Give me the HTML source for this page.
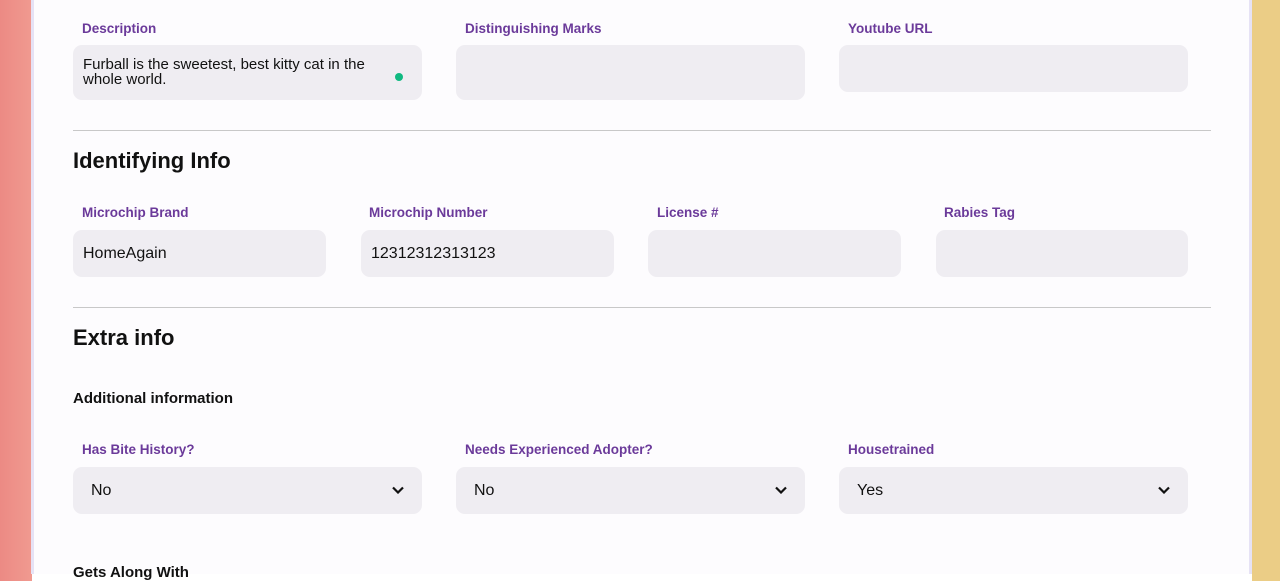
<!DOCTYPE html>
<html><head><style>
body{margin:0;width:1280px;height:574px;overflow:hidden;font-family:"Liberation Sans",sans-serif;background:linear-gradient(90deg,#ec8a84 0,#f09a90 32px,#fff 32px,#fff 1252px,#ebcd86 1252px);position:relative}
.panel{position:absolute;left:31px;top:0;width:1221px;height:574px;background:#fdfcfe;border-left:3px solid #e6e2f5;border-right:3px solid #e6e2f5;box-sizing:border-box}
.lbl{position:absolute;color:#6b3a9a;font-weight:bold;font-size:13.5px}
.box{position:absolute;background:#efedf2;border-radius:9px;font-size:16px;color:#111;box-sizing:border-box;padding-left:10px}
h2{position:absolute;margin:0;font-size:22px;font-weight:bold;color:#111;left:73px}
.hr{position:absolute;left:73px;width:1138px;height:1px;background:#c8c8c8}
.chev{position:absolute;right:18px;top:19px}
</style></head><body>
<div class="panel"></div>
<div class="lbl" style="left:82px;top:21px">Description</div>
<div class="lbl" style="left:465px;top:21px">Distinguishing Marks</div>
<div class="lbl" style="left:848px;top:21px">Youtube URL</div>
<div class="box" style="left:73px;top:45px;width:349px;height:55px;padding-top:12px;font-size:15px;line-height:15px">Furball is the sweetest, best kitty cat in the<br>whole world.<span style="position:absolute;left:322px;top:28px;width:8px;height:8px;border-radius:50%;background:#10b981"></span></div>
<div class="box" style="left:456px;top:45px;width:349px;height:55px"></div>
<div class="box" style="left:839px;top:45px;width:349px;height:47px"></div>
<div class="hr" style="top:130px"></div>
<h2 style="top:148px">Identifying Info</h2>
<div class="lbl" style="left:82px;top:205px">Microchip Brand</div>
<div class="lbl" style="left:369px;top:205px">Microchip Number</div>
<div class="lbl" style="left:657px;top:205px">License #</div>
<div class="lbl" style="left:944px;top:205px">Rabies Tag</div>
<div class="box" style="left:73px;top:230px;width:253px;height:47px;line-height:47px">HomeAgain</div>
<div class="box" style="left:361px;top:230px;width:253px;height:47px;line-height:47px">12312312313123</div>
<div class="box" style="left:648px;top:230px;width:253px;height:47px"></div>
<div class="box" style="left:936px;top:230px;width:252px;height:47px"></div>
<div class="hr" style="top:307px"></div>
<h2 style="top:325px">Extra info</h2>
<div style="position:absolute;left:73px;top:390px;font-weight:bold;font-size:15px;color:#111">Additional information</div>
<div class="lbl" style="left:82px;top:442px">Has Bite History?</div>
<div class="lbl" style="left:465px;top:442px">Needs Experienced Adopter?</div>
<div class="lbl" style="left:848px;top:442px">Housetrained</div>
<div class="box" style="left:73px;top:467px;width:349px;height:47px;line-height:47px;padding-left:18px">No<svg class="chev" width="12" height="8" viewBox="0 0 12 8"><path d="M1 1.5l5 5 5-5" fill="none" stroke="#111" stroke-width="2.2"/></svg></div>
<div class="box" style="left:456px;top:467px;width:349px;height:47px;line-height:47px;padding-left:18px">No<svg class="chev" width="12" height="8" viewBox="0 0 12 8"><path d="M1 1.5l5 5 5-5" fill="none" stroke="#111" stroke-width="2.2"/></svg></div>
<div class="box" style="left:839px;top:467px;width:349px;height:47px;line-height:47px;padding-left:18px">Yes<svg class="chev" width="12" height="8" viewBox="0 0 12 8"><path d="M1 1.5l5 5 5-5" fill="none" stroke="#111" stroke-width="2.2"/></svg></div>
<div style="position:absolute;left:73px;top:564px;font-weight:bold;font-size:15px;color:#111">Gets Along With</div>
</body></html>
